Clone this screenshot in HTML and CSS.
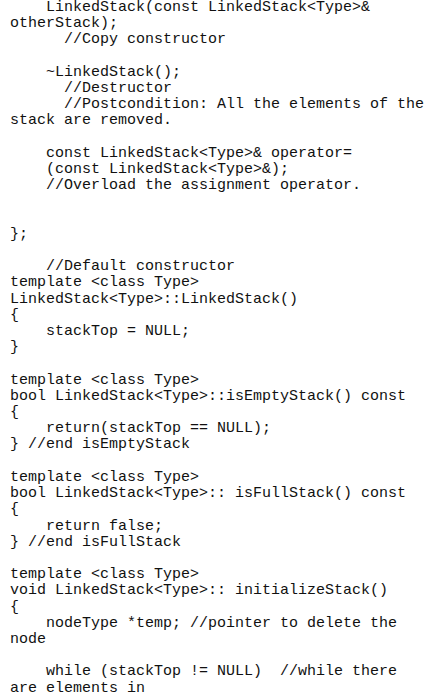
FILE: index.html
```html
<!DOCTYPE html>
<html lang="en">
<head>
<meta charset="utf-8">
<title>LinkedStack</title>
<link rel="stylesheet" href="styles.css">
</head>
<body>
<pre class="code">    LinkedStack(const LinkedStack&lt;Type&gt;&amp;
otherStack);
      //Copy constructor

    ~LinkedStack();
      //Destructor
      //Postcondition: All the elements of the
stack are removed.

    const LinkedStack&lt;Type&gt;&amp; operator=
    (const LinkedStack&lt;Type&gt;&amp;);
    //Overload the assignment operator.


};

    //Default constructor
template &lt;class Type&gt;
LinkedStack&lt;Type&gt;::LinkedStack()
{
    stackTop = NULL;
}

template &lt;class Type&gt;
bool LinkedStack&lt;Type&gt;::isEmptyStack() const
{
    return(stackTop == NULL);
} //end isEmptyStack

template &lt;class Type&gt;
bool LinkedStack&lt;Type&gt;:: isFullStack() const
{
    return false;
} //end isFullStack

template &lt;class Type&gt;
void LinkedStack&lt;Type&gt;:: initializeStack()
{
    nodeType *temp; //pointer to delete the
node

    while (stackTop != NULL)  //while there
are elements in</pre>
</body>
</html>
```
FILE: styles.css
```css
html, body {
  margin: 0;
  padding: 0;
  background: #ffffff;
}

body {
  overflow: hidden;
}

.code {
  margin: 0;
  padding: 0 0 0 10px;
  font-family: "Liberation Mono", "DejaVu Sans Mono", monospace;
  font-size: 15px;
  line-height: 16.2px;
  color: #111111;
  white-space: pre;
}
```
